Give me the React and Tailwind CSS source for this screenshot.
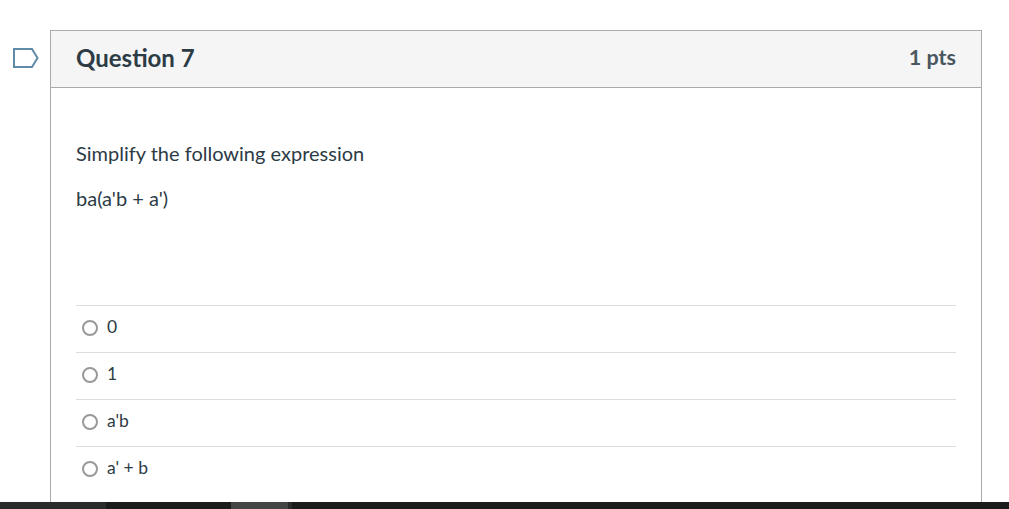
const answers = ["0", "1", "a'b", "a' + b"];

function Bookmark() {
  return (
    <svg width="26" height="20" viewBox="0 0 26 20" className="mt-[18px] ml-[13px] shrink-0">
      <path d="M1 1H19L24.5 10L19 19H1Z" fill="#fff" stroke="#5f8aa8" strokeWidth="2" />
    </svg>
  );
}

export default function App() {
  return (
    <div className="flex flex-col h-[509px] w-[1009px] overflow-hidden bg-white font-['Lato','Open_Sans',sans-serif] text-[#2d3b45]">
      <div className="flex flex-1 min-h-0 pt-[30px]">
        <div className="w-[50px] shrink-0">
          <Bookmark />
        </div>
        <div className="w-[932px] border border-b-0 border-[#aaaaaa]">
          <div className="flex items-center justify-between h-[57px] px-[25px] pb-[3px] bg-[#f5f5f5] border-b border-[#aaaaaa]">
            <h2 className="text-[24px] font-bold">Question 7</h2>
            <span className="text-[21.5px] font-bold text-[#4a5660]">1 pts</span>
          </div>
          <div className="px-[25px]">
            <p className="mt-[52px] text-[20px] leading-[26px]">Simplify the following expression</p>
            <p className="mt-[19px] text-[20px] leading-[26px]">ba(a'b + a')</p>
            <ul className="mt-[94px]">
              {answers.map((a) => (
                <li key={a} className="flex items-center h-[47px] border-t border-[#dddddd] pl-[6px]">
                  <span className="w-[16px] h-[16px] mb-[2px] rounded-full border-2 border-[#999999] bg-white" />
                  <span className="ml-[9px] mb-[4px] text-[17.5px]">{a}</span>
                </li>
              ))}
            </ul>
          </div>
        </div>
      </div>
      <div className="flex h-[7px] shrink-0 bg-[#1b1b1b]">
        <div className="w-[106px] bg-[#2b2b2b]" />
        <div className="w-[125px]" />
        <div className="w-[57px] bg-[#444444]" />
        <div className="w-[4px] bg-[#2b2b2b]" />
      </div>
    </div>
  );
}
